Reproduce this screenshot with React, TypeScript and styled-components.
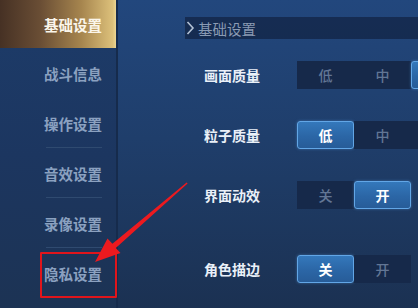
import React from "react";
import styled, { createGlobalStyle } from "styled-components";

const Global = createGlobalStyle`
  html, body { margin: 0; padding: 0; background: #1c3556; }
  body { font-family: "Noto Sans CJK SC", "Noto Sans", sans-serif; }
`;

const Screen = styled.div`
  position: relative;
  width: 418px;
  height: 308px;
  overflow: hidden;
  display: flex;
  background: linear-gradient(180deg, #22477d 0%, #1f3e6b 45%, #1b3152 100%);
`;

const Sidebar = styled.nav`
  width: 116px;
  flex: none;
  display: flex;
  flex-direction: column;
  background: linear-gradient(180deg, #1d3c6a 0%, #1c3660 50%, #1c3354 100%);
  border-right: 2px solid #162b4c;
`;

const NavItem = styled.div<{ $active?: boolean; $h: number; $sep?: boolean }>`
  position: relative;
  height: ${(p) => p.$h}px;
  flex: none;
  display: flex;
  align-items: center;
  justify-content: flex-end;
  padding-right: 14px;
  font-size: 14.5px;
  font-weight: ${(p) => (p.$active ? 700 : 600)};
  color: ${(p) => (p.$active ? "#fbf6ea" : "#8ba1c0")};
  background: ${(p) =>
    p.$active
      ? "linear-gradient(90deg, #463124 0%, #6a4e35 35%, #a6854e 70%, #dcc07a 97%, #ecd693 100%)"
      : "transparent"};
  &::after {
    content: "";
    display: ${(p) => (p.$sep ? "block" : "none")};
    position: absolute;
    right: 14px;
    bottom: 0;
    width: 56px;
    height: 1px;
    background: #2f4a70;
  }
`;

const Highlight = styled.span`
  position: absolute;
  left: 40px;
  top: 4px;
  width: 73px;
  height: 42px;
  border: 2px solid #e0151b;
  border-radius: 1px;
`;

const Main = styled.main`
  flex: 1;
  padding: 17px 0 0 67px;
  display: flex;
  flex-direction: column;
`;

const SectionBar = styled.div`
  height: 22px;
  display: flex;
  align-items: center;
  gap: 3px;
  padding-left: 1px;
  background: rgba(12, 24, 50, 0.55);
  color: #8a9ab3;
  font-size: 14.5px;
`;

const Chevron = styled.svg`
  width: 9px;
  height: 16px;
  flex: none;
`;

const Row = styled.div<{ $top: number }>`
  margin-top: ${(p) => p.$top}px;
  height: 28px;
  display: flex;
  align-items: center;
  padding-left: 19px;
`;

const Label = styled.div`
  width: 93px;
  flex: none;
  color: #eaf0f8;
  font-size: 14px;
  font-weight: 700;
`;

const Segments = styled.div`
  display: flex;
  height: 28px;
  flex: none;
`;

const Segment = styled.div<{ $on?: boolean }>`
  box-sizing: border-box;
  width: 57px;
  height: 28px;
  flex: none;
  display: flex;
  align-items: center;
  justify-content: center;
  font-size: 14px;
  font-weight: ${(p) => (p.$on ? 700 : 500)};
  color: ${(p) => (p.$on ? "#ffffff" : "#627695")};
  background: ${(p) =>
    p.$on ? "linear-gradient(180deg, #3478bb 0%, #2b66a6 55%, #275c98 100%)" : "#16294a"};
  border: ${(p) => (p.$on ? "1.5px solid #62a6e6" : "none")};
  border-radius: ${(p) => (p.$on ? "3px" : "0")};
  box-shadow: ${(p) => (p.$on ? "0 0 3px rgba(90,160,230,0.5)" : "none")};
`;

const Arrow = styled.svg`
  position: absolute;
  left: 0;
  top: 0;
  width: 418px;
  height: 308px;
  pointer-events: none;
`;

const navItems = [
  { t: "基础设置", active: true, h: 48 },
  { t: "战斗信息", h: 50 },
  { t: "操作设置", h: 50, sep: true },
  { t: "音效设置", h: 50, sep: true },
  { t: "录像设置", h: 50, sep: true },
  { t: "隐私设置", h: 50, mark: true },
];

/* the third segment runs off the right edge; its caption is out of view */
const rows = [
  { label: "画面质量", top: 22, opts: ["低", "中", ""], on: 2 },
  { label: "粒子质量", top: 32, opts: ["低", "中", ""], on: 0 },
  { label: "界面动效", top: 32, opts: ["关", "开"], on: 1 },
  { label: "角色描边", top: 46, opts: ["关", "开"], on: 0 },
];

export default function App() {
  return (
    <>
      <Global />
      <Screen>
        <Sidebar>
          {navItems.map((n) => (
            <NavItem key={n.t} $active={n.active} $h={n.h} $sep={n.sep}>
              {n.t}
              {n.mark && <Highlight />}
            </NavItem>
          ))}
        </Sidebar>
        <Main>
          <SectionBar>
            <Chevron viewBox="0 0 9 16">
              <path d="M1.5 2 L7 8 L1.5 14" fill="none" stroke="#b3c1d4" strokeWidth="1.6" />
            </Chevron>
            基础设置
          </SectionBar>
          {rows.map((r) => (
            <Row key={r.label} $top={r.top}>
              <Label>{r.label}</Label>
              <Segments>
                {r.opts.map((o, i) => (
                  <Segment key={i} $on={i === r.on}>
                    {o}
                  </Segment>
                ))}
              </Segments>
            </Row>
          ))}
        </Main>
        <Arrow viewBox="0 0 418 308">
          <polygon
            points="187.6,183.6 115.8,248 120.5,253 95,262 107.5,238.5 112.4,243.8 186.6,182.6"
            fill="#ec1a1f"
          />
        </Arrow>
      </Screen>
    </>
  );
}
